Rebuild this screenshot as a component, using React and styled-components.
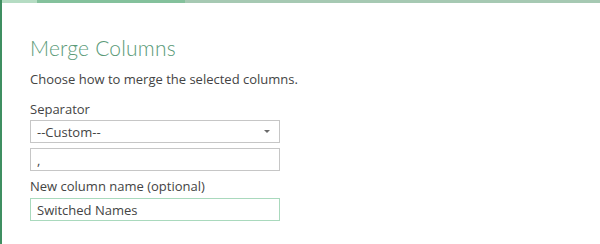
import React from "react";
import styled, { createGlobalStyle } from "styled-components";

const Global = createGlobalStyle`
  html, body { margin: 0; padding: 0; background: #fff; }
  body { font-family: "Segoe UI", "Open Sans", "Noto Sans", sans-serif; }
`;

const Frame = styled.div`
  width: 600px;
  height: 244px;
  box-sizing: border-box;
  border-left: 2px solid #3f8f61;
  display: flex;
  flex-direction: column;
  overflow: hidden;
`;

const TopBar = styled.div`
  display: flex;
  height: 3px;
`;

const Seg = styled.div`
  width: ${(p) => p.$w || "auto"};
  flex: ${(p) => (p.$w ? "none" : "1")};
  background: ${(p) => p.$c};
`;

const Body = styled.div`
  padding: 32px 0 0 28px;
  display: flex;
  flex-direction: column;
  color: #444;
`;

const Title = styled.h1`
  margin: 0;
  font-family: "Lato", "Open Sans", sans-serif;
  font-weight: 300;
  font-size: 21px;
  line-height: 26px;
  color: #5a9a78;
  letter-spacing: 0.2px;
`;

const Subtitle = styled.p`
  margin: 9px 0 0;
  font-size: 13px;
  line-height: 18px;
  color: #444;
`;

const Label = styled.div`
  font-size: 13px;
  line-height: 17px;
  color: #444;
  margin-top: ${(p) => p.$mt || 0}px;
`;

const Field = styled.div`
  box-sizing: border-box;
  width: 250px;
  height: 23px;
  margin-top: ${(p) => p.$mt || 0}px;
  border: 1px solid ${(p) => (p.$focus ? "#a9d9bd" : "#c6c6c6")};
  display: flex;
  align-items: center;
  justify-content: space-between;
  padding: 0 9px 0 6px;
  font-size: 13px;
  color: #444;
`;

const Caret = styled.svg`
  width: 6px;
  height: 3px;
`;

export default function App() {
  return (
    <>
      <Global />
      <Frame>
        <TopBar>
          <Seg $w="35px" $c="#b5dcc3" />
          <Seg $w="148px" $c="#84c19c" />
          <Seg $c="#a6c9b3" />
        </TopBar>
        <Body>
          <Title>Merge Columns</Title>
          <Subtitle>Choose how to merge the selected columns.</Subtitle>
          <Label $mt={13}>Separator</Label>
          <Field $mt={2}>
            <span>--Custom--</span>
            <Caret viewBox="0 0 6 3">
              <path d="M0 0h6L3 3z" fill="#6a6a6a" />
            </Caret>
          </Field>
          <Field $mt={5}>
            <span>,</span>
          </Field>
          <Label $mt={7}>New column name (optional)</Label>
          <Field $mt={3} $focus>
            <span>Switched Names</span>
          </Field>
        </Body>
      </Frame>
    </>
  );
}
